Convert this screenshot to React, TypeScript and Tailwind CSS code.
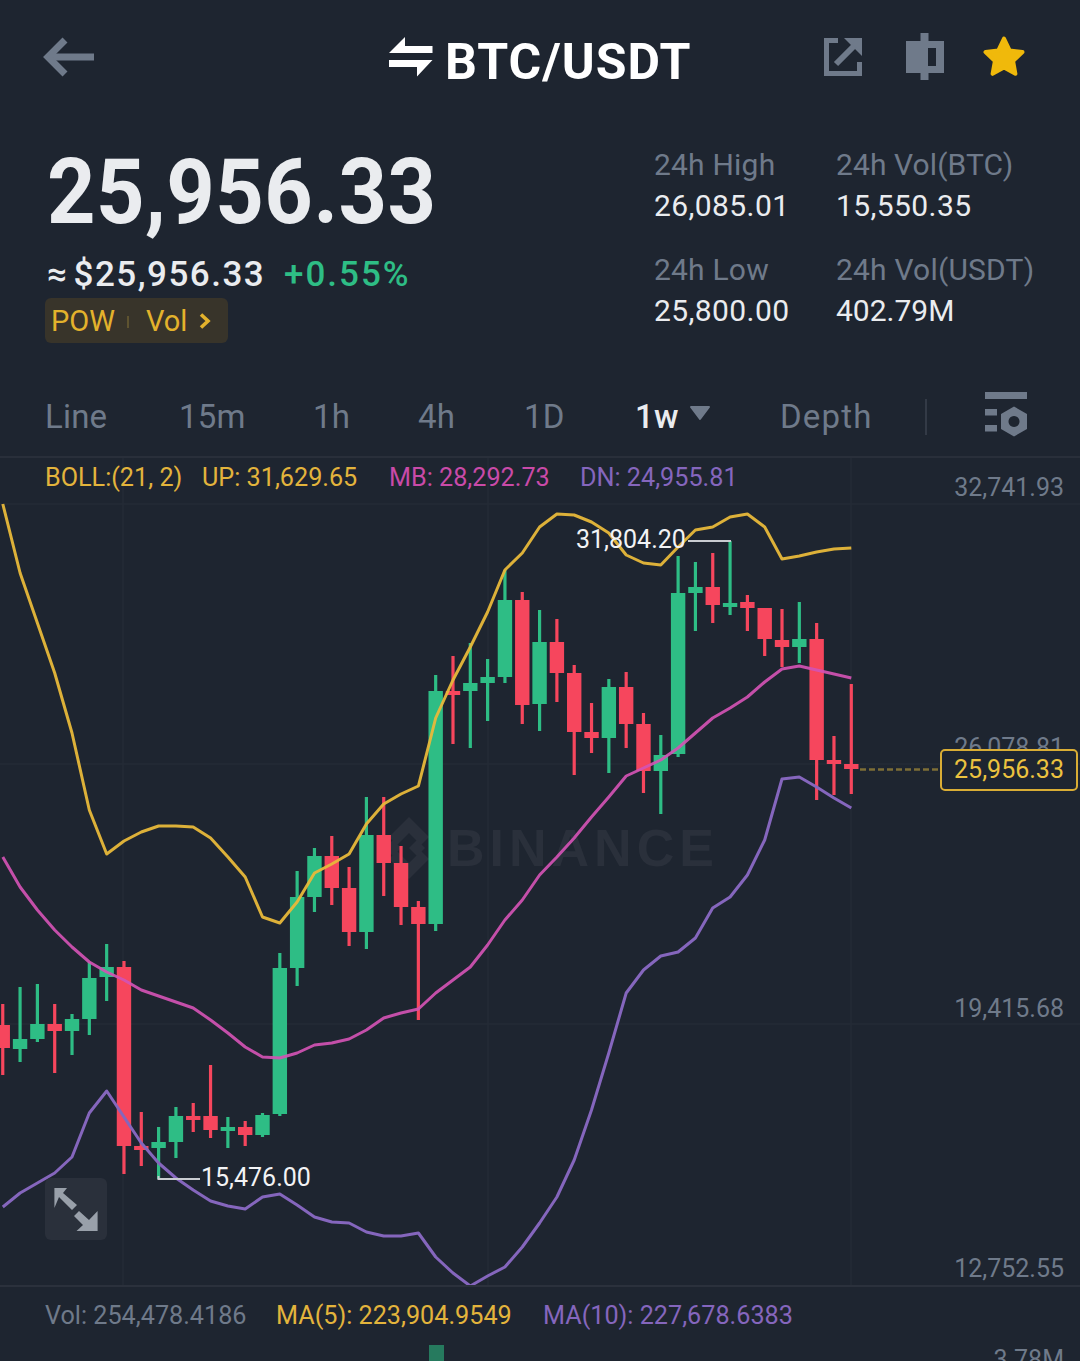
import React from "react";

type C = [number, number, number, number, number, number];
// [index, isGreen, high, bodyTop, bodyBottom, low]
const raw: C[] = [
  [0, 0, 1004, 1025, 1048, 1075],[1, 1, 987, 1039, 1049, 1062],[2, 1, 984, 1024, 1039, 1042],[3, 0, 1004, 1024, 1031, 1073],
  [4, 1, 1014, 1019, 1031, 1055],[5, 1, 962, 978, 1019, 1035],[6, 1, 944, 967, 977, 1001],[7, 0, 961, 967, 1146, 1174],
  [8, 0, 1112, 1146, 1148, 1166],[9, 1, 1127, 1142, 1148, 1179],[10, 1, 1107, 1116, 1142, 1158],[11, 0, 1103, 1116, 1119, 1132],
  [12, 0, 1065, 1116, 1130, 1138],[13, 1, 1117, 1127, 1130, 1148],[14, 0, 1121, 1127, 1135, 1146],[15, 1, 1113, 1115, 1135, 1137],
  [16, 1, 953, 968, 1114, 1116],[17, 1, 871, 897, 968, 986],[18, 1, 848, 856, 897, 912],[19, 0, 836, 856, 888, 905],
  [20, 0, 867, 888, 932, 946],[21, 1, 797, 835, 932, 949],[22, 0, 797, 835, 863, 896],[23, 0, 846, 863, 907, 925],
  [24, 0, 901, 907, 924, 1020],[25, 1, 675, 691, 924, 931],[26, 0, 656, 691, 693, 744],[27, 1, 643, 683, 691, 748],
  [28, 1, 659, 677, 683, 721],[29, 1, 570, 600, 677, 683],[30, 0, 592, 600, 705, 724],[31, 1, 610, 642, 704, 731],
  [32, 0, 619, 642, 673, 702],[33, 0, 665, 673, 732, 775],[34, 0, 703, 732, 738, 753],[35, 1, 679, 687, 738, 773],
  [36, 0, 672, 687, 724, 748],[37, 0, 713, 724, 771, 793],[38, 1, 735, 755, 771, 814],[39, 1, 556, 593, 754, 757],
  [40, 1, 562, 587, 593, 631],[41, 0, 553, 587, 605, 623],[42, 1, 541, 603, 605, 615],[43, 0, 595, 602, 608, 631],
  [44, 0, 608, 608, 639, 656],[45, 0, 609, 640, 647, 667],[46, 1, 602, 639, 647, 663],[47, 0, 623, 639, 760, 800],
  [48, 0, 736, 760, 764, 795],[49, 0, 684, 764, 769, 794],
];
const xOf = (i: number) => 2.75 + 17.317 * i;
const up = [504,573,623,673,733,810,854,841,832,826,826,827,838,857,877,917,923,902,873,864,854,824,804,794,786,718,680,647,612,570,553,527,514,515,522,533,555,563,565,547,530,527,517,514,527,559,556,552,549,548];
const mb = [857,887,910,930,947,962,972,980,990,996,1002,1008,1020,1033,1047,1057,1058,1053,1045,1043,1039,1030,1018,1013,1009,993,980,967,945,920,900,875,857,838,817,797,776,768,760,748,733,718,708,697,682,669,666,670,674,678];
const dn = [1207,1193,1183,1173,1157,1113,1091,1117,1143,1163,1178,1190,1201,1206,1209,1197,1194,1205,1217,1222,1223,1232,1236,1236,1233,1257,1273,1286,1276,1267,1247,1223,1197,1160,1110,1053,993,970,956,952,938,908,897,875,840,779,777,787,798,808];
const pts = (a: number[]) => a.map((y, i) => `${xOf(i).toFixed(1)},${y}`).join(" ");

const din = "font-['Roboto',sans-serif]";
const GRAY = "#6f7a8a";

function Chart() {
  return (
    <svg className="absolute left-0 top-0" width="1080" height="827" viewBox="0 458 1080 827">
      {[504, 764, 1024].map((y) => (
        <line key={y} x1="0" x2="1080" y1={y} y2={y} stroke="#252b36" strokeWidth="1.5" />
      ))}
      {[123, 488, 851].map((x) => (
        <line key={x} x1={x} x2={x} y1="458" y2="1285" stroke="#252b36" strokeWidth="1.5" />
      ))}
      {raw.map(([i, g, h, t, b, l]) => {
        const x = xOf(i);
        const c = g ? "#2ebd85" : "#f6465d";
        return (
          <g key={i}>
            <line x1={x} x2={x} y1={h} y2={l} stroke={c} strokeWidth="3.2" />
            <rect x={x - 7.2} y={t} width="14.4" height={Math.max(b - t, 4)} fill={c} />
          </g>
        );
      })}
      <polyline points={pts(up)} fill="none" stroke="#e8b83a" strokeWidth="3" strokeLinejoin="round" opacity="0.95" />
      <polyline points={pts(mb)} fill="none" stroke="#d352b4" strokeWidth="3" strokeLinejoin="round" opacity="0.92" />
      <polyline points={pts(dn)} fill="none" stroke="#8566bd" strokeWidth="3" strokeLinejoin="round" />
      <polyline points="688,541 731,541" fill="none" stroke="#c9ccd1" strokeWidth="2" />
      <polyline points="158.5,1176 158.5,1179 200,1179" fill="none" stroke="#c9ccd1" strokeWidth="2" />
      <line x1="860" x2="940" y1="769.5" y2="769.5" stroke="#7d6e36" strokeWidth="2.5" strokeDasharray="6 3" />
    </svg>
  );
}

function Watermark() {
  return (
    <div className="absolute left-[385px] top-[359px] flex items-center">
      <svg width="52" height="62" viewBox="0 0 52 62" fill="#2a303b">
        <path d="M24 0 L44 20 L36 28 L24 16 L12 28 L4 20 Z" />
        <path d="M24 62 L44 42 L36 34 L24 46 L12 34 L4 42 Z" />
        <path d="M0 31 L8 23 L16 31 L8 39 Z" />
        <path d="M24 31 L32 23 L40 31 L32 39 Z" />
        <path d="M44 31 L52 23 L60 31 L52 39 Z" />
      </svg>
      <span className="ml-[10px] text-[52px] leading-none font-bold tracking-[5px] text-[#2a303b] font-['Liberation_Sans',sans-serif]">BINANCE</span>
    </div>
  );
}

function AxisLabel({ y, children }: { y: string; children: React.ReactNode }) {
  return <div className={`absolute right-[16px] text-[25px] leading-[30px] text-[#6f7a8a] ${y}`}>{children}</div>;
}

export default function App() {
  return (
    <div className={`w-[1080px] h-[1361px] overflow-hidden flex flex-col bg-[#1e2530] ${din}`}>
      {/* Header */}
      <div className="h-[118px] shrink-0 relative flex items-start">
        <svg className="ml-[42px] mt-[36px]" width="54" height="42" viewBox="0 0 54 42" fill="none" stroke={GRAY} strokeWidth="7">
          <path d="M52 21 H6" />
          <path d="M23 4 L6 21 L23 38" strokeLinejoin="miter" />
        </svg>
        <svg className="ml-[293px] mt-[37px]" width="44" height="40" viewBox="389 37 44 40" fill="#fff">
          <path d="M405 37 V46 H432.5 V53 H389 Z" />
          <path d="M389 60 H432.5 L417 76.5 V67 H389 Z" />
        </svg>
        <div className="ml-[12px] mt-[32px] text-[50px] leading-[60px] font-bold text-white tracking-[1px] font-['Roboto',sans-serif]">BTC/USDT</div>
        <svg className="absolute left-[823px] top-[37px]" width="40" height="40" viewBox="0 0 40 40">
          <path d="M15 3.5 H3.5 V36.5 H36.5 V25" fill="none" stroke={GRAY} strokeWidth="5" />
          <path d="M21 1 H39 V19 Z" fill={GRAY} />
          <path d="M31 9 L13 27" fill="none" stroke={GRAY} strokeWidth="6" />
        </svg>
        <svg className="absolute left-[906px] top-[33px]" width="38" height="47" viewBox="0 0 38 47" fill={GRAY}>
          <rect x="14.5" y="0" width="8" height="47" />
          <rect x="0" y="8" width="38" height="32" />
          <rect x="22" y="15" width="8" height="18" fill="#1e2530" />
        </svg>
        <svg className="absolute left-[982px] top-[35px]" width="44" height="44" viewBox="0 0 44 44">
          <path d="M22 3.5 L27.6 15.4 L40.5 17.1 L31.1 26 L33.4 38.8 L22 32.6 L10.6 38.8 L12.9 26 L3.5 17.1 L16.4 15.4 Z" fill="#f0b90b" stroke="#f0b90b" strokeWidth="4" strokeLinejoin="round" />
        </svg>
      </div>

      {/* Price section */}
      <div className="h-[262px] shrink-0 flex items-start">
        <div className="w-[654px] pl-[47px] shrink-0">
          <div className="text-[91px] leading-[100px] mt-[24px] font-bold text-[#eaecef] tracking-[0.5px] font-['Roboto',sans-serif] scale-x-[0.93] origin-left whitespace-nowrap">25,956.33</div>
          <div className="mt-[12px] flex items-center text-[35px] leading-[42px] whitespace-nowrap">
            <span className="font-medium text-[#eaecef] w-[237px] tracking-[1.5px]">≈<span className="ml-[5px]">$25,956.33</span></span>
            <span className="font-medium text-[#2ebd85] tracking-[2px]">+0.55%</span>
          </div>
          <div className="mt-[2px] -ml-[2px] w-[183px] h-[45px] rounded-[6px] bg-[#38342a] flex items-center pl-[6px] pt-[3px] text-[29px] text-[#e3b22c]">
            <span>POW</span>
            <span className="ml-[12px] w-[2px] h-[12px] bg-[#5e5330]"></span>
            <span className="ml-[17px]">Vol</span>
            <svg className="ml-[11px] mb-[3px]" width="14" height="18" viewBox="0 0 14 18" fill="none" stroke="#e3b22c" strokeWidth="3.6">
              <path d="M3 2.5 L10 9 L3 15.5" />
            </svg>
          </div>
        </div>
        <div className="grid grid-cols-[182px_1fr] pt-[26px] text-[30px] leading-[41px] whitespace-nowrap">
          <div className="text-[#6f7a8a] tracking-[0.2px]">24h High</div>
          <div className="text-[#6f7a8a] tracking-[0.1px]">24h Vol(BTC)</div>
          <div className="text-[#eaecef] tracking-[0.4px]">26,085.01</div>
          <div className="text-[#eaecef] tracking-[0.4px]">15,550.35</div>
          <div className="text-[#6f7a8a] mt-[23px] tracking-[0.2px]">24h Low</div>
          <div className="text-[#6f7a8a] mt-[23px] tracking-[0.2px]">24h Vol(USDT)</div>
          <div className="text-[#eaecef] tracking-[0.4px]">25,800.00</div>
          <div className="text-[#eaecef] tracking-[0px]">402.79M</div>
        </div>
      </div>

      {/* Tabs */}
      <div className="h-[78px] shrink-0 flex items-center pl-[45px] border-b-2 border-[#292f3a] text-[33px] text-[#6f7a8a] tracking-[0.2px] pb-[3px]">
        <span className="w-[134px]">Line</span>
        <span className="w-[134px]">15m</span>
        <span className="w-[105px]">1h</span>
        <span className="w-[106px]">4h</span>
        <span className="w-[111px]">1D</span>
        <span className="w-[145px] flex items-center">
          <span className="font-medium text-[#eaecef]">1w</span>
          <svg className="ml-[10px] mb-[8px]" width="22" height="16" viewBox="0 0 22 16" fill={GRAY}>
            <path d="M2 2 H20 L11 14 Z" stroke={GRAY} strokeWidth="2" strokeLinejoin="round" />
          </svg>
        </span>
        <span className="w-[145px] tracking-[1.2px]">Depth</span>
        <span className="w-[59px]">
          <span className="block w-[2px] h-[36px] bg-[#333a46]"></span>
        </span>
        <svg className="mb-[5px]" width="44" height="46" viewBox="985 391 44 46" fill={GRAY}>
          <rect x="986" y="392" width="42" height="7" />
          <rect x="986" y="409" width="12" height="6.5" />
          <rect x="986" y="425" width="12" height="6.5" />
          <path fillRule="evenodd" d="M1015 406.5 L1028 414 V429 L1015 436.5 L1002 429 V414 Z M1015 416 a5.5 5.5 0 1 0 0.01 0 Z" />
        </svg>
      </div>

      {/* Chart */}
      <div className="h-[827px] shrink-0 relative overflow-hidden">
        <Watermark />
        <Chart />
        <div className="relative flex pl-[45px] pt-[4px] text-[25.2px] leading-[32px] whitespace-nowrap">
          <span className="w-[157px] text-[#e3b43c]">BOLL:(21, 2)</span>
          <span className="w-[187px] text-[#e3b43c]">UP: 31,629.65</span>
          <span className="w-[191px] text-[#c94aa8]">MB: 28,292.73</span>
          <span className="text-[#8566bd]">DN: 24,955.81</span>
        </div>
        <AxisLabel y="top-[15px]">32,741.93</AxisLabel>
        <AxisLabel y="top-[275px]">26,078.81</AxisLabel>
        <AxisLabel y="top-[536px]">19,415.68</AxisLabel>
        <AxisLabel y="top-[796px]">12,752.55</AxisLabel>
        <div className="absolute left-[940px] top-[291px] w-[138px] h-[42px] rounded-[5px] border-2 border-[#d9ad35] bg-[#1e2530] flex items-center justify-center text-[25px] text-[#ecc23f]">25,956.33</div>
        <div className="absolute left-[576px] top-[67px] text-[25px] leading-[30px] text-[#f2f3f5]">31,804.20</div>
        <div className="absolute left-[201px] top-[705px] text-[25px] leading-[30px] text-[#f2f3f5]">15,476.00</div>
        <div className="absolute left-[45px] top-[720px] w-[62px] h-[62px] rounded-[6px] bg-[#2a303b] flex items-center justify-center">
          <svg width="62" height="62" viewBox="45 1178 62 62" fill="#99a0aa">
            <path d="M54.4 1188 H67 L63 1193 L77 1205 L72 1210 L59 1197 L54.4 1208 Z" />
            <path d="M97.6 1231 H76.5 L83 1225 L74 1216 L79 1211 L89 1220 L97.6 1211 Z" />
          </svg>
        </div>
      </div>

      {/* Volume */}
      <div className="flex-1 relative overflow-hidden border-t-2 border-[#2b313c]">
        <div className="flex pl-[45px] pt-[13px] text-[25.2px] leading-[32px] whitespace-nowrap">
          <span className="w-[231px] text-[#6f7a8a]">Vol: 254,478.4186</span>
          <span className="w-[267px] text-[#e3b43c]">MA(5): 223,904.9549</span>
          <span className="text-[#8566bd]">MA(10): 227,678.6383</span>
        </div>
        <div className="absolute left-[429px] top-[58px] w-[15px] h-[20px] bg-[#267a5e]"></div>
        <div className="absolute right-[16px] top-[58px] text-[25px] leading-[30px] text-[#6f7a8a]">3.78M</div>
      </div>
    </div>
  );
}
